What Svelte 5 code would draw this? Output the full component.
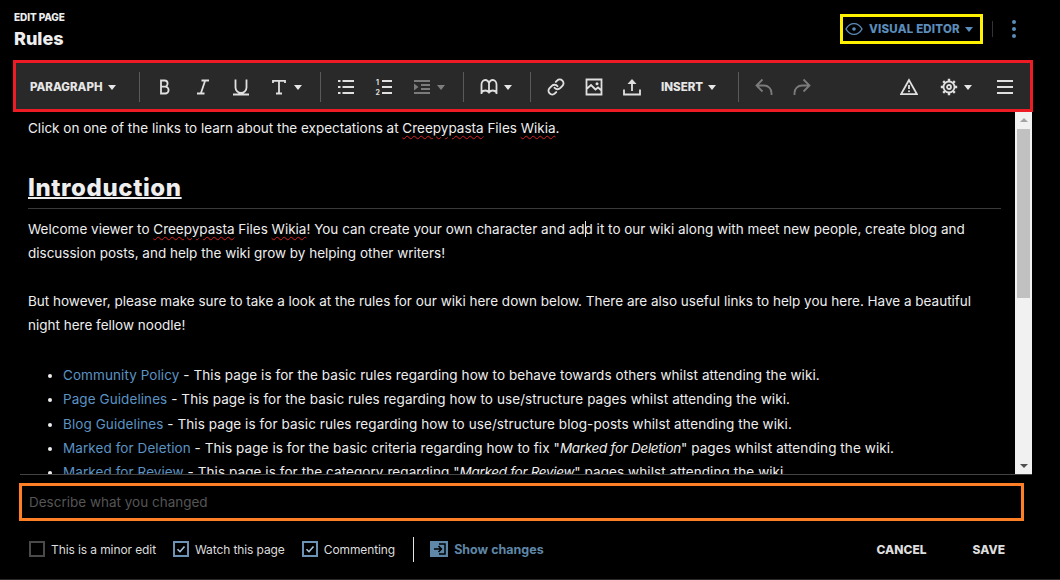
<script>
  const policies = [
    { name: 'Community Policy', text: ' - This page is for the basic rules regarding how to behave towards others whilst attending the wiki.' },
    { name: 'Page Guidelines', text: ' - This page is for the basic rules regarding how to use/structure pages whilst attending the wiki.' },
    { name: 'Blog Guidelines', text: ' - This page is for basic rules regarding how to use/structure blog-posts whilst attending the wiki.' },
    { name: 'Marked for Deletion', text: ' - This page is for the basic criteria regarding how to fix "', em: 'Marked for Deletion', after: '" pages whilst attending the wiki.' },
    { name: 'Marked for Review', text: ' - This page is for the category regarding "', em: 'Marked for Review', after: '" pages whilst attending the wiki.' }
  ];
</script>

<div class="page">
  <header class="head">
    <div class="titles">
      <div class="kicker">EDIT PAGE</div>
      <div class="title">Rules</div>
    </div>
    <div class="head-right">
      <div class="mode">
        <svg class="ico" viewBox="0 0 18 18"><path d="M1 9c2-3.600 4.800-5.400 8-5.400s6 1.800 8 5.400c-2 3.600-4.800 5.400-8 5.400S3 12.600 1 9z" /><circle class="fill" cx="9" cy="9" r="1.800" /></svg>
        <span>VISUAL EDITOR</span>
        <i class="caret blue"></i>
      </div>
      <span class="head-sep"></span>
      <div class="kebab"><b></b><b></b><b></b></div>
    </div>
  </header>

  <div class="toolbar">
    <div class="tool para"><span class="label">PARAGRAPH</span><i class="caret"></i></div>
    <span class="sep"></span>
    <div class="tool"><svg class="ico" viewBox="0 0 18 18"><path d="M5 2.500h3.500a3.100 3.100 0 0 1 0 6.200H5zM5 8.700h4.200a3.400 3.400 0 0 1 0 6.800H5z" /></svg></div>
    <div class="tool"><svg class="ico" viewBox="0 0 18 18"><path d="M7.500 2.500h7.500M3 15.500h7.500M11.200 2.500 6.800 15.500" /></svg></div>
    <div class="tool"><svg class="ico" viewBox="0 0 18 18"><path d="M3.500 1.500v8a5.500 5.500 0 0 0 11 0v-8M1 16.500h16" /></svg></div>
    <div class="tool drop"><svg class="ico" viewBox="0 0 18 18"><path d="M3 5V2.800h12V5M9 2.800v12.700M6 15.500h6" /></svg><i class="caret"></i></div>
    <span class="sep"></span>
    <div class="tool"><svg class="ico" viewBox="0 0 18 18"><path d="M5.500 3h11.500M5.500 9h11.500M5.500 15h11.500M1 3h2.500M1 9h2.500M1 15h2.500" /></svg></div>
    <div class="tool"><svg class="ico" viewBox="0 0 18 18"><path d="M7 3h10M7 9h10M7 15h10" /><text x="1" y="7" class="num">1</text><text x="0.500" y="17" class="num">2</text></svg></div>
    <div class="tool drop off"><svg class="ico" viewBox="0 0 18 18"><path d="M1 3h16M8 7h9M8 11h9M1 15h16" /><path class="fill" d="M1 5.600 5.500 9 1 12.400z" /></svg><i class="caret"></i></div>
    <span class="sep"></span>
    <div class="tool drop"><svg class="ico" viewBox="0 0 18 18"><path d="M1.500 16V6.500C1.500 3.800 3.200 2 5.300 2 7 2 8.300 3.200 9 5c.7-1.800 2-3 3.700-3 2.100 0 3.800 1.800 3.800 4.500V16M9 5v9M1.500 14.500c1.200-1.400 2.500-2 3.800-2 1.500 0 2.800.7 3.700 2 .9-1.300 2.200-2 3.700-2 1.300 0 2.600.6 3.800 2" /></svg><i class="caret"></i></div>
    <span class="sep"></span>
    <div class="tool"><svg class="ico" viewBox="0 0 24 24"><g class="wide"><path d="M10 13a5 5 0 0 0 7.540.54l3-3a5 5 0 0 0-7.070-7.070l-1.720 1.710" /><path d="M14 11a5 5 0 0 0-7.540-.54l-3 3a5 5 0 0 0 7.070 7.070l1.710-1.710" /></g></svg></div>
    <div class="tool"><svg class="ico" viewBox="0 0 18 18"><path d="M1.500 1.500h15v15h-15zM1.500 11l4.500-4 4.500 4.500 2.500-2 3.500 3" /><circle class="fill" cx="12" cy="5.800" r="1.500" /></svg></div>
    <div class="tool"><svg class="ico" viewBox="0 0 18 18"><path d="M9 13V4M1 11.500v5h16v-5" /><path class="fill" d="M9 1 13.500 6h-9z" /></svg></div>
    <div class="tool insert"><span class="label">INSERT</span><i class="caret"></i></div>
    <span class="sep"></span>
    <div class="tool off"><svg class="ico" viewBox="0 0 18 18"><path d="M7.500 1.500 1.500 7.500l6 6M1.500 7.500H9a7.500 7.500 0 0 1 7.500 7.500v2" /></svg></div>
    <div class="tool off"><svg class="ico" viewBox="0 0 18 18"><path d="M10.500 1.500l6 6-6 6M16.500 7.500H9A7.500 7.500 0 0 0 1.500 15v2" /></svg></div>
    <span class="grow"></span>
    <div class="tool"><svg class="ico" viewBox="0 0 18 18"><path d="M9 2 1 16.200h16zM9 7v4" /><circle class="fill" cx="9" cy="13.300" r="1" /></svg></div>
    <div class="tool drop gear"><svg class="ico" viewBox="0 0 18 18"><circle cx="9" cy="9" r="5.500" /><circle cx="9" cy="9" r="2" /><path class="thick" d="M9 .8v2.600M9 14.600v2.600M.8 9h2.600M14.600 9h2.600M3.200 3.200 5 5M13 13l1.800 1.800M3.200 14.800 5 13M13 5l1.800-1.800" /></svg><i class="caret"></i></div>
    <div class="tool"><svg class="ico" viewBox="0 0 18 18"><path d="M1 3h16M1 9h16M1 15h16" /></svg></div>
  </div>

  <div class="editor">
    <div class="content">
      <p class="first">Click on one of the links to learn about the expectations at <span class="spell">Creepypasta</span> Files <span class="spell">Wikia</span>.</p>
      <h2><u>Introduction</u></h2>
      <p>Welcome viewer to <span class="spell">Creepypasta</span> Files <span class="spell">Wikia</span>! You can create your own character and ad<span class="cursor"></span>d it to our wiki along with meet new people, create blog and discussion posts, and help the wiki grow by helping other writers!</p>
      <p class="gap">But however, please make sure to take a look at the rules for our wiki here down below. There are also useful links to help you here. Have a beautiful night here fellow noodle!</p>
      <ul>
        {#each policies as item}
          <li><a href="#top">{item.name}</a>{item.text}{#if item.em}<em>{item.em}</em>{item.after}{/if}</li>
        {/each}
      </ul>
    </div>
    <div class="scrollbar">
      <i class="arrow up"></i>
      <div class="track"><div class="thumb"></div></div>
      <i class="arrow down"></i>
    </div>
  </div>

  <div class="summary">Describe what you changed</div>

  <footer class="foot">
    <label class="check first-check"><span class="box"></span>This is a minor edit</label>
    <label class="check"><span class="box on"><svg viewBox="0 0 12 12"><path d="M2.500 6.200 5 8.700l4.500-5.200" /></svg></span>Watch this page</label>
    <label class="check"><span class="box on"><svg viewBox="0 0 12 12"><path d="M2.500 6.200 5 8.700l4.500-5.200" /></svg></span>Commenting</label>
    <span class="foot-sep"></span>
    <div class="changes">
      <svg viewBox="0 0 18 18"><path class="bg" d="M0 1h18v16H0z" /><path class="cut" d="M9 4h6v10H9" /><path class="cut" d="M4 9h7M8.500 6l3 3-3 3" /></svg>
      Show changes
    </div>
    <span class="grow"></span>
    <div class="action cancel">CANCEL</div>
    <div class="action save">SAVE</div>
  </footer>
</div>

<style>
  :global(body) { margin:0; background:#000; }
  .page { width:1060px; height:580px; box-sizing:border-box; background:#000; color:#eee; font-family:Inter,"Liberation Sans",sans-serif; font-size:13.500px; display:flex; flex-direction:column; overflow:hidden; border-bottom:1px solid #2a2a2a; }

  .head { height:60px; display:flex; justify-content:space-between; box-sizing:border-box; padding:0 42px 0 14px; flex:none; }
  .titles { padding-top:11px; }
  .kicker { font-size:10px; font-weight:800; line-height:12px; letter-spacing:-.1px; }
  .title { font-size:18px; font-weight:800; line-height:24px; margin-top:4px; }
  .head-right { display:flex; align-items:center; height:30px; margin-top:14px; }
  .mode { width:143px; height:30px; box-sizing:border-box; border:3px solid #fff200; display:flex; align-items:center; padding-left:2px; color:#5b8cba; font-size:11.500px; font-weight:800; letter-spacing:.2px; white-space:nowrap; }
  .mode .ico { width:18px; height:18px; margin-right:6px; stroke:#5b8cba; stroke-width:1.400; }
  .mode .ico .fill { fill:#5b8cba; stroke:none; }
  .mode .caret { margin-left:5px; }
  .head-sep { width:1px; height:16px; background:#333; margin:0 17px 0 9px; }
  .kebab { display:flex; flex-direction:column; gap:3px; width:8px; align-items:center; }
  .kebab b { width:4px; height:4px; border-radius:50%; background:#5b8cba; }

  .toolbar { height:52px; margin:0 27px 0 13px; box-sizing:border-box; border:3px solid #ed1c24; background:#292929; display:flex; align-items:center; padding:2px 6px 0 0; flex:none; }
  .tool { width:38px; height:38px; display:flex; align-items:center; justify-content:center; flex:none; }
  .tool.drop { width:54px; justify-content:flex-start; padding-left:10px; box-sizing:border-box; }
  .tool.drop .caret { margin-left:6px; }
  .tool.off { opacity:.45; }
  .tool.gear { margin-left:2px; margin-right:2px; }
  .para { width:117px; justify-content:flex-start; padding-left:14px; box-sizing:border-box; }
  .insert { width:81px; justify-content:flex-start; padding-left:10px; box-sizing:border-box; }
  .label { font-size:11.500px; font-weight:800; color:#e6e6e6; }
  .para .caret, .insert .caret { margin-left:5px; }
  .sep { width:1px; height:30px; background:#5a5a5a; margin:0 6px; flex:none; }
  .grow { flex:1; }
  .ico { width:18px; height:18px; fill:none; stroke:#e0e0e0; stroke-width:1.800; flex:none; }
  .ico .fill { fill:#e0e0e0; stroke:none; }
  .ico .thick { stroke-width:2.400; }
  .ico .wide { stroke-width:2.600; stroke-linecap:round; }
  .num { font-family:Inter,sans-serif; font-size:7px; font-weight:700; fill:#e0e0e0; stroke:none; }
  .caret { display:inline-block; width:0; height:0; border-left:4.500px solid transparent; border-right:4.500px solid transparent; border-top:5px solid #e6e6e6; flex:none; }
  .caret.blue { border-top-color:#5b8cba; }

  .editor { height:363px; margin:0 28px 0 20px; display:flex; border-bottom:1px solid #444; box-sizing:border-box; flex:none; overflow:hidden; }
  .content { flex:1; min-width:0; padding:4px 14px 0 8px; overflow:hidden; line-height:24px; }
  p { margin:0; }
  .gap { margin-top:24px; }
  h2 { font-size:24px; font-weight:800; line-height:30px; margin:33px 0 8px; padding-bottom:5px; border-bottom:1px solid #3a3a3a; letter-spacing:.6px; }
  h2 u { text-underline-offset:1px; text-decoration-thickness:2px; }
  .spell { text-decoration:underline wavy #d92020 1px; text-underline-offset:2px; }
  .cursor { display:inline-block; width:1px; height:16px; background:#e6e6e6; margin-right:-1px; vertical-align:-3px; }
  ul { margin:26px 0 0; padding:0 0 0 35px; }
  li { line-height:24.300px; white-space:nowrap; letter-spacing:.08px; }
  em { letter-spacing:-.3px; }
  a { color:#5b93c4; text-decoration:none; }

  .scrollbar { width:17px; background:#f1f1f1; display:flex; flex-direction:column; align-items:center; flex:none; }
  .track { flex:1; width:100%; padding:1px 2px; box-sizing:border-box; }
  .thumb { height:169px; background:#c1c1c1; }
  .arrow { width:0; height:0; border-left:4px solid transparent; border-right:4px solid transparent; margin:6px 0; flex:none; }
  .arrow.up { border-bottom:4px solid #a3a3a3; }
  .arrow.down { border-top:4px solid #505050; }

  .summary { height:38px; margin:8px 36px 0 19px; box-sizing:border-box; border:3px solid #ff7f27; padding-left:7px; display:flex; align-items:center; color:#555; font-size:13.500px; flex:none; }

  .foot { flex:1; display:flex; align-items:center; padding:0 55px 2px 29px; font-size:12px; letter-spacing:-.1px; color:#ddd; }
  .check { display:flex; align-items:center; gap:6px; margin-right:17px; }
  .box { width:16px; height:16px; box-sizing:border-box; border:2px solid #4a4a4a; display:block; flex:none; }
  .box.on { border-color:#6c93b6; }
  .box svg { display:block; width:12px; height:12px; fill:none; stroke:#a9c4dc; stroke-width:1.600; }
  .foot-sep { width:1px; height:25px; background:#e6e6e6; margin:0 16px 0 1px; flex:none; }
  .changes { display:flex; align-items:center; gap:6px; color:#5f87a8; font-weight:700; font-size:12.500px; letter-spacing:0; }
  .changes svg { width:18px; height:18px; }
  .changes .bg { fill:#5f87a8; }
  .changes .cut { fill:none; stroke:#000; stroke-width:1.500; }
  .action { font-size:12px; font-weight:800; color:#ddd; letter-spacing:0; }
  .cancel { margin-right:46px; }
</style>
